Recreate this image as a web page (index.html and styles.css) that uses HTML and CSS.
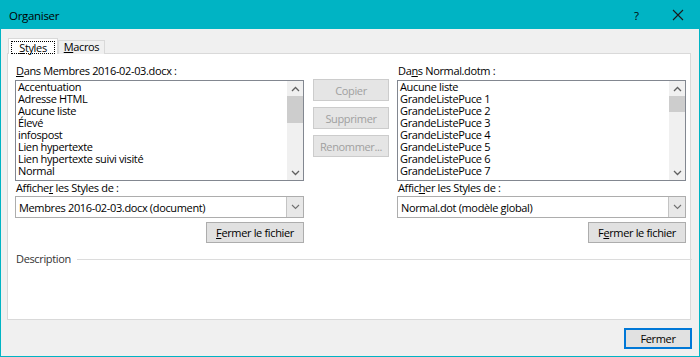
FILE: index.html
```html
<!DOCTYPE html>
<html lang="fr">
<head>
    <meta charset="UTF-8">
    <title>Organiser</title>
    <link rel="stylesheet" href="styles.css">
</head>
<body>
<div class="window">
    <div class="titlebar">
        <span class="title">Organiser</span>
        <span class="help">?</span>
        <svg class="close" width="12" height="12" viewBox="0 0 12 12"><path d="M1 1L11 11M11 1L1 11" stroke="#1a1a1a" stroke-width="1.1"/></svg>
    </div>
    <div class="content">
        <div class="tabs">
            <div class="tab active"><span class="focus"><u>S</u>tyles</span></div>
            <div class="tab"><u>M</u>acros</div>
        </div>
        <div class="panel">
            <div class="columns">
                <div class="col">
                    <div class="lbl"><u>D</u>ans Membres 2016-02-03.docx :</div>
                    <div class="listbox">
                        <ul class="items">
                            <li>Accentuation</li>
                            <li>Adresse HTML</li>
                            <li>Aucune liste</li>
                            <li>Élevé</li>
                            <li>infospost</li>
                            <li>Lien hypertexte</li>
                            <li>Lien hypertexte suivi visité</li>
                            <li>Normal</li>
                        </ul>
                        <div class="vscroll">
                            <svg width="9" height="6" viewBox="0 0 9 6"><path d="M1 5L4.5 1.5L8 5" fill="none" stroke="#606060" stroke-width="1.3"/></svg>
                            <div class="track"><div class="thumb thumb-left"></div></div>
                            <svg width="9" height="6" viewBox="0 0 9 6"><path d="M1 1L4.5 4.5L8 1" fill="none" stroke="#606060" stroke-width="1.3"/></svg>
                        </div>
                    </div>
                    <div class="lbl">Affiche<u>r</u> les Styles de :</div>
                    <div class="combo">
                        <span class="combo-text">Membres 2016-02-03.docx (document)</span>
                        <span class="combo-btn"><svg width="9" height="6" viewBox="0 0 9 6"><path d="M1 1L4.5 4.5L8 1" fill="none" stroke="#707070" stroke-width="1.1"/></svg></span>
                    </div>
                    <div class="row-end"><button class="btn"><u>F</u>ermer le fichier</button></div>
                </div>
                <div class="mid">
                    <button class="btn" disabled>Copier</button>
                    <button class="btn" disabled>Supprimer</button>
                    <button class="btn" disabled>Renommer...</button>
                </div>
                <div class="col">
                    <div class="lbl">Da<u>n</u>s Normal.dotm :</div>
                    <div class="listbox">
                        <ul class="items">
                            <li>Aucune liste</li>
                            <li>GrandeListePuce 1</li>
                            <li>GrandeListePuce 2</li>
                            <li>GrandeListePuce 3</li>
                            <li>GrandeListePuce 4</li>
                            <li>GrandeListePuce 5</li>
                            <li>GrandeListePuce 6</li>
                            <li>GrandeListePuce 7</li>
                        </ul>
                        <div class="vscroll">
                            <svg width="9" height="6" viewBox="0 0 9 6"><path d="M1 5L4.5 1.5L8 5" fill="none" stroke="#606060" stroke-width="1.3"/></svg>
                            <div class="track"><div class="thumb thumb-right"></div></div>
                            <svg width="9" height="6" viewBox="0 0 9 6"><path d="M1 1L4.5 4.5L8 1" fill="none" stroke="#606060" stroke-width="1.3"/></svg>
                        </div>
                    </div>
                    <div class="lbl">Affic<u>h</u>er les Styles de :</div>
                    <div class="combo">
                        <span class="combo-text">Normal.dot (modèle global)</span>
                        <span class="combo-btn"><svg width="9" height="6" viewBox="0 0 9 6"><path d="M1 1L4.5 4.5L8 1" fill="none" stroke="#707070" stroke-width="1.1"/></svg></span>
                    </div>
                    <div class="row-end"><button class="btn">F<u>e</u>rmer le fichier</button></div>
                </div>
            </div>
            <div class="desc">
                <span>Description</span>
                <span class="rule"></span>
            </div>
        </div>
        <div class="footer">
            <button class="btn default">Fermer</button>
        </div>
    </div>
</div>
</body>
</html>
```

FILE: styles.css
```css
:root {
    --teal: #00b4c4;
    --face: #f0f0f0;
    --text: #000000;
    --btn-face: #e1e1e1;
    --btn-border: #adadad;
}
* {
    box-sizing: border-box;
}
body {
    margin: 0;
    font-family: "Open Sans", "Noto Sans", sans-serif;
    font-size: 11px;
    letter-spacing: -0.35px;
    color: var(--text);
}
u {
    text-underline-offset: 1px;
}
.window {
    width: 700px;
    height: 357px;
    border: 1px solid var(--teal);
    background: var(--face);
    display: flex;
    flex-direction: column;
}
.titlebar {
    height: 28px;
    background: var(--teal);
    display: flex;
    align-items: center;
    padding: 0 0 0 8px;
    font-size: 11.5px;
    letter-spacing: -0.3px;
}
.title {
    flex: 1;
    margin-top: 1px;
}
.help {
    width: 12px;
    margin-right: 26px;
}
.close {
    margin-right: 15px;
}
.content {
    flex: 1;
    padding: 9px 8px 0 6px;
}
.tabs {
    display: flex;
    margin-left: 1px;
    position: relative;
    z-index: 1;
    height: 16px;
}
.tab {
    height: 14px;
    width: 47px;
    margin-top: 2px;
    border: 1px solid #d9d9d9;
    border-bottom: none;
    background: var(--face);
    line-height: 12px;
    text-align: center;
}
.tab.active {
    height: 16px;
    width: 50px;
    margin-top: 0;
    background: #fff;
    padding: 2px 2px 0 2px;
}
.focus {
    display: block;
    border: 1px dotted #000;
    line-height: 11px;
    height: 13px;
}
.panel {
    margin-top: -1px;
    width: 684px;
    height: 267px;
    background: #fff;
    border: 1px solid #d9d9d9;
    padding: 10px 0 0 7px;
}
.columns {
    display: flex;
}
.col {
    width: 289px;
}
.lbl {
    height: 16px;
    line-height: 14px;
    padding-left: 1px;
}
.listbox {
    height: 101px;
    border: 1px solid #828790;
    display: flex;
}
.items {
    flex: 1;
    list-style: none;
    margin: 0;
    padding: 0 0 0 2px;
}
.items li {
    line-height: 12px;
    height: 12px;
    white-space: nowrap;
}
.vscroll {
    width: 16px;
    background: var(--face);
    display: flex;
    flex-direction: column;
    align-items: center;
    padding: 5px 0 4px;
}
.track {
    flex: 1;
    width: 100%;
}
.thumb {
    background: #cdcdcd;
    margin-top: 4px;
    width: 16px;
}
.thumb-left {
    height: 27px;
}
.thumb-right {
    height: 16px;
}
.combo {
    margin-top: -1px;
    height: 22px;
    border: 1px solid #adadad;
    display: flex;
    align-items: center;
}
.combo-text {
    flex: 1;
    padding-left: 3px;
}
.combo-btn {
    width: 17px;
    height: 20px;
    background: #e8e8e8;
    border-left: 1px solid #c4c4c4;
    display: flex;
    align-items: center;
    justify-content: center;
}
.row-end {
    display: flex;
    justify-content: flex-end;
    margin-top: 4px;
}
.btn {
    font-family: inherit;
    font-size: 11px;
    letter-spacing: -0.35px;
    color: var(--text);
    background: var(--btn-face);
    border: 1px solid var(--btn-border);
    height: 21px;
    padding: 0 9px;
    line-height: 17px;
}
.btn:disabled {
    color: #a0a0a0;
    background: #e5e5e5;
    border-color: #cccccc;
}
.mid {
    width: 76px;
    margin: 15px 8px 0 9px;
    display: flex;
    flex-direction: column;
    gap: 6px;
}
.mid .btn {
    width: 76px;
    height: 22px;
    padding: 0;
}
.col .row-end .btn {
    width: 98px;
    padding: 0;
}
.desc {
    display: flex;
    align-items: center;
    margin-top: 9px;
    width: 677px;
    padding-left: 1px;
    line-height: 14px;
}
.desc span:first-child {
    color: #333;
    margin-right: 6px;
}
.rule {
    flex: 1;
    height: 1px;
    background: #dcdcdc;
}
.footer {
    display: flex;
    justify-content: flex-end;
    padding: 8px 0 0 0;
}
.btn.default {
    width: 68px;
    height: 21px;
    padding: 0;
    border: 2px solid #0078d7;
    line-height: 16px;
    margin-right: -1px;
}
```
